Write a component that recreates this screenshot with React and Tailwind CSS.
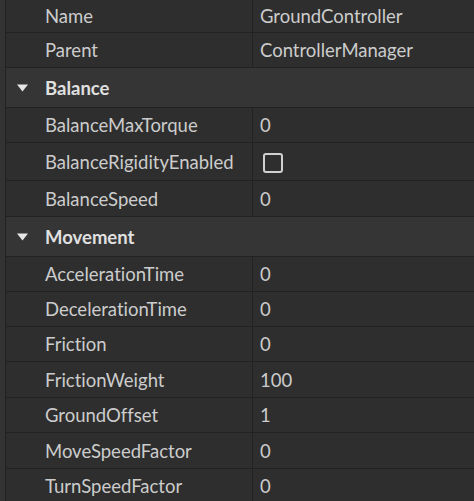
const sections = [
  {
    rows: [
      { name: 'Name', value: 'GroundController', h: 'h-[33px]' },
      { name: 'Parent', value: 'ControllerManager', h: 'h-[35px]' },
    ],
  },
  {
    title: 'Balance',
    rows: [
      { name: 'BalanceMaxTorque', value: '0', h: 'h-[35px]' },
      { name: 'BalanceRigidityEnabled', checkbox: true, h: 'h-[38px]' },
      { name: 'BalanceSpeed', value: '0', h: 'h-[36px]' },
    ],
  },
  {
    title: 'Movement',
    rows: [
      { name: 'AccelerationTime', value: '0', h: 'h-[35px]' },
      { name: 'DecelerationTime', value: '0', h: 'h-[35px]' },
      { name: 'Friction', value: '0', h: 'h-[35px]' },
      { name: 'FrictionWeight', value: '100', h: 'h-[36px]' },
      { name: 'GroundOffset', value: '1', h: 'h-[35px]' },
      { name: 'MoveSpeedFactor', value: '0', h: 'h-[36px]' },
      { name: 'TurnSpeedFactor', value: '0', h: 'h-[35px]' },
    ],
  },
];

const PropRow = ({ row }) => (
  <div className={`flex ${row.h} border-b border-[#222222] bg-[#2e2e2e]`}>
    <div className="w-[247px] shrink-0 flex items-center pl-[39px] pt-[2px] border-r border-[#222222] text-[#cccccc]">
      {row.name}
    </div>
    <div className="flex-1 flex items-center pl-[7px] pt-[2px] text-[#cccccc]">
      {row.checkbox ? (
        <span className="ml-[3px] w-[20px] h-[20px] rounded-[3px] border-2 border-[#d0d0d0]" />
      ) : (
        row.value
      )}
    </div>
  </div>
);

const Header = ({ title }) => (
  <div className="flex items-center h-[40px] bg-[#353535] border-b border-[#222222]">
    <svg width="11" height="8" viewBox="0 0 11 8" className="ml-[11px]">
      <path d="M0 0.5 H11 L5.5 7.5 Z" fill="#e6e6e6" />
    </svg>
    <span className="ml-[17px] pt-[2px] font-bold text-[#e0e0e0]">{title}</span>
  </div>
);

export default function App() {
  return (
    <div
      className="w-[474px] h-[501px] overflow-hidden flex bg-[#2e2e2e] text-[18.5px]"
      style={{ fontFamily: 'Lato, "Noto Sans", sans-serif', fontVariantLigatures: 'none' }}
    >
      <div className="w-[6px] shrink-0 bg-[#333333] border-r border-[#222222]" />
      <div className="flex-1 flex flex-col">
        {sections.map((s, i) => (
          <div key={i}>
            {s.title && <Header title={s.title} />}
            {s.rows.map((r) => (
              <PropRow key={r.name} row={r} />
            ))}
          </div>
        ))}
      </div>
    </div>
  );
}
